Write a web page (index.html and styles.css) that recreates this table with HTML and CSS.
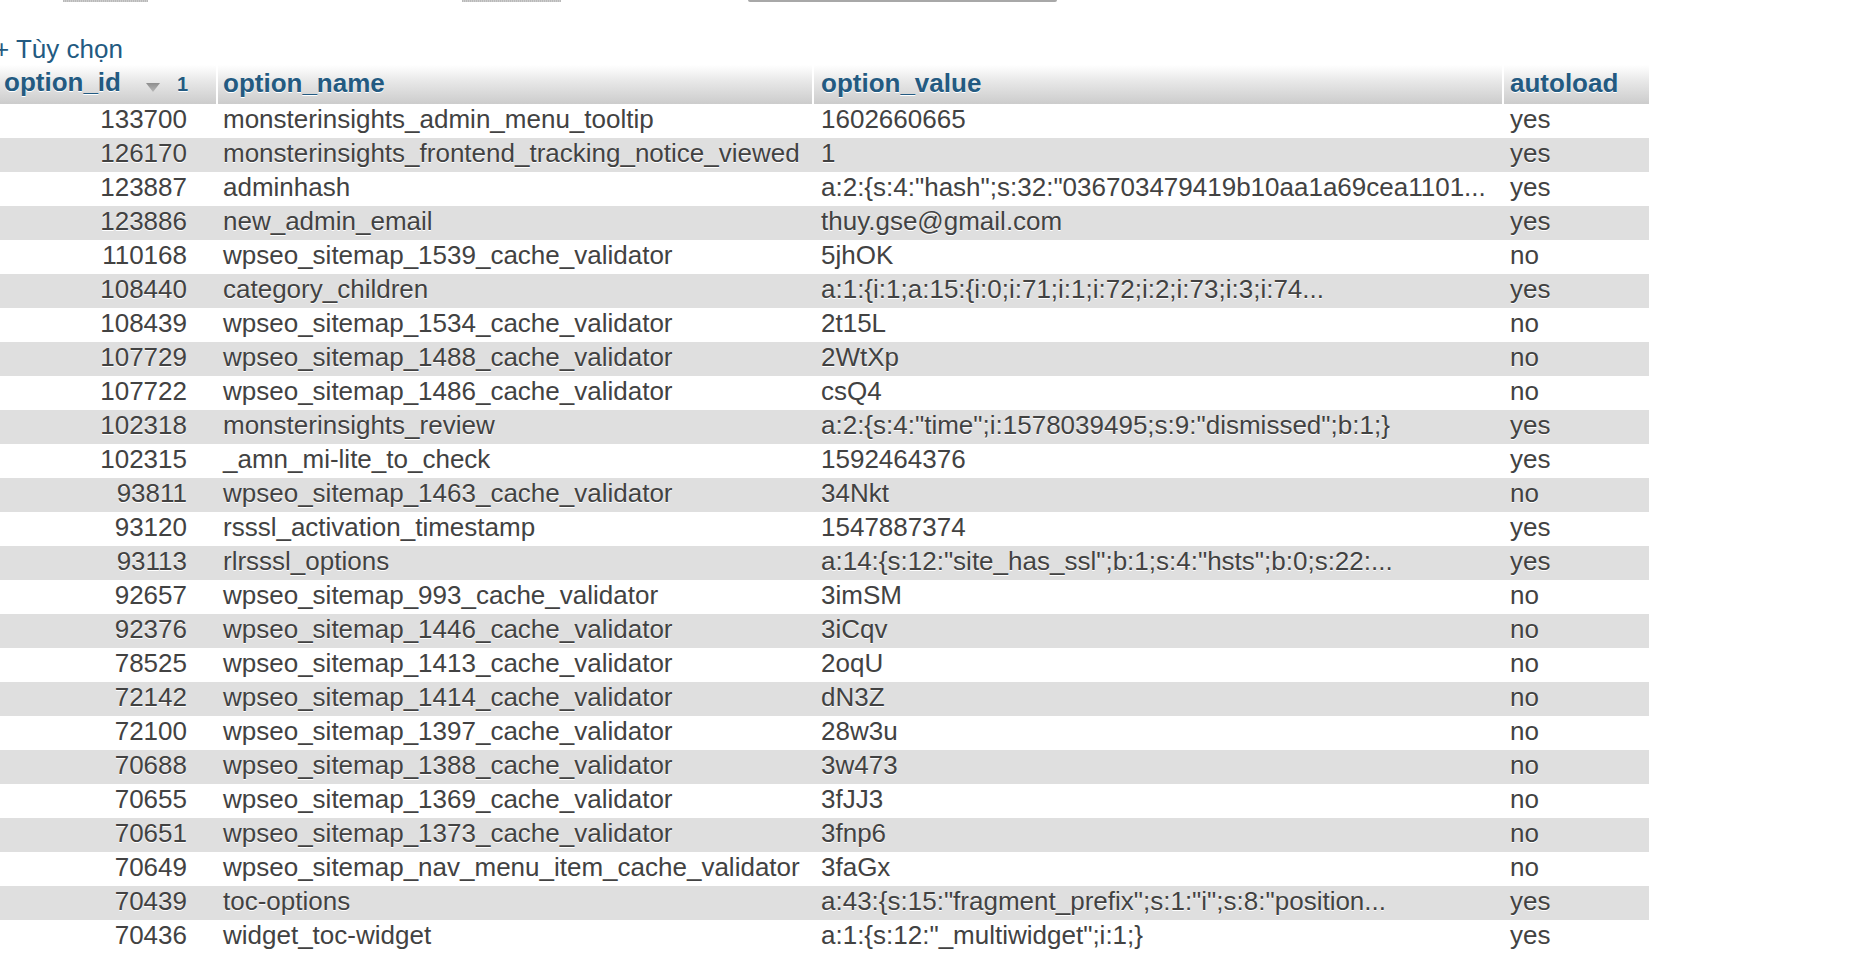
FILE: index.html
```html
<!DOCTYPE html>
<html lang="vi">
<head>
<meta charset="utf-8">
<title>wp_options</title>
<link rel="stylesheet" href="styles.css">
</head>
<body>
<div class="topbar">
  <span class="btn-edge btn-a"></span>
  <span class="btn-edge btn-b"></span>
  <span class="btn-edge btn-c"></span>
</div>
<div class="options-link">+ Tùy chọn</div>
<table class="data">
  <colgroup>
    <col class="c1"><col class="c2"><col class="c3"><col class="c4">
  </colgroup>
  <thead>
    <tr>
      <th class="th-id"><span class="hlabel">option_id</span><svg class="sort-icon" width="14" height="9" viewBox="0 0 14 9"><defs><linearGradient id="g" x1="0" y1="0" x2="0" y2="1"><stop offset="0" stop-color="#8e8e8e"/><stop offset="1" stop-color="#b8b8b8"/></linearGradient></defs><polygon points="0,0 14,0 7,9" fill="url(#g)"/></svg><span class="sort-num">1</span></th>
      <th class="th-name"><span class="hlabel">option_name</span></th>
      <th class="th-value"><span class="hlabel">option_value</span></th>
      <th class="th-auto last"><span class="hlabel">autoload</span></th>
    </tr>
  </thead>
  <tbody>
    <tr><td class="num">133700</td><td class="name">monsterinsights_admin_menu_tooltip</td><td class="value">1602660665</td><td class="auto">yes</td></tr>
    <tr><td class="num">126170</td><td class="name">monsterinsights_frontend_tracking_notice_viewed</td><td class="value">1</td><td class="auto">yes</td></tr>
    <tr><td class="num">123887</td><td class="name">adminhash</td><td class="value">a:2:{s:4:"hash";s:32:"036703479419b10aa1a69cea1101...</td><td class="auto">yes</td></tr>
    <tr><td class="num">123886</td><td class="name">new_admin_email</td><td class="value">thuy.gse@gmail.com</td><td class="auto">yes</td></tr>
    <tr><td class="num">110168</td><td class="name">wpseo_sitemap_1539_cache_validator</td><td class="value">5jhOK</td><td class="auto">no</td></tr>
    <tr><td class="num">108440</td><td class="name">category_children</td><td class="value">a:1:{i:1;a:15:{i:0;i:71;i:1;i:72;i:2;i:73;i:3;i:74...</td><td class="auto">yes</td></tr>
    <tr><td class="num">108439</td><td class="name">wpseo_sitemap_1534_cache_validator</td><td class="value">2t15L</td><td class="auto">no</td></tr>
    <tr><td class="num">107729</td><td class="name">wpseo_sitemap_1488_cache_validator</td><td class="value">2WtXp</td><td class="auto">no</td></tr>
    <tr><td class="num">107722</td><td class="name">wpseo_sitemap_1486_cache_validator</td><td class="value">csQ4</td><td class="auto">no</td></tr>
    <tr><td class="num">102318</td><td class="name">monsterinsights_review</td><td class="value">a:2:{s:4:"time";i:1578039495;s:9:"dismissed";b:1;}</td><td class="auto">yes</td></tr>
    <tr><td class="num">102315</td><td class="name">_amn_mi-lite_to_check</td><td class="value">1592464376</td><td class="auto">yes</td></tr>
    <tr><td class="num">93811</td><td class="name">wpseo_sitemap_1463_cache_validator</td><td class="value">34Nkt</td><td class="auto">no</td></tr>
    <tr><td class="num">93120</td><td class="name">rsssl_activation_timestamp</td><td class="value">1547887374</td><td class="auto">yes</td></tr>
    <tr><td class="num">93113</td><td class="name">rlrsssl_options</td><td class="value">a:14:{s:12:"site_has_ssl";b:1;s:4:"hsts";b:0;s:22:...</td><td class="auto">yes</td></tr>
    <tr><td class="num">92657</td><td class="name">wpseo_sitemap_993_cache_validator</td><td class="value">3imSM</td><td class="auto">no</td></tr>
    <tr><td class="num">92376</td><td class="name">wpseo_sitemap_1446_cache_validator</td><td class="value">3iCqv</td><td class="auto">no</td></tr>
    <tr><td class="num">78525</td><td class="name">wpseo_sitemap_1413_cache_validator</td><td class="value">2oqU</td><td class="auto">no</td></tr>
    <tr><td class="num">72142</td><td class="name">wpseo_sitemap_1414_cache_validator</td><td class="value">dN3Z</td><td class="auto">no</td></tr>
    <tr><td class="num">72100</td><td class="name">wpseo_sitemap_1397_cache_validator</td><td class="value">28w3u</td><td class="auto">no</td></tr>
    <tr><td class="num">70688</td><td class="name">wpseo_sitemap_1388_cache_validator</td><td class="value">3w473</td><td class="auto">no</td></tr>
    <tr><td class="num">70655</td><td class="name">wpseo_sitemap_1369_cache_validator</td><td class="value">3fJJ3</td><td class="auto">no</td></tr>
    <tr><td class="num">70651</td><td class="name">wpseo_sitemap_1373_cache_validator</td><td class="value">3fnp6</td><td class="auto">no</td></tr>
    <tr><td class="num">70649</td><td class="name">wpseo_sitemap_nav_menu_item_cache_validator</td><td class="value">3faGx</td><td class="auto">no</td></tr>
    <tr><td class="num">70439</td><td class="name">toc-options</td><td class="value">a:43:{s:15:"fragment_prefix";s:1:"i";s:8:"position...</td><td class="auto">yes</td></tr>
    <tr><td class="num">70436</td><td class="name">widget_toc-widget</td><td class="value">a:1:{s:12:"_multiwidget";i:1;}</td><td class="auto">yes</td></tr>
  </tbody>
</table>
</body>
</html>
```

FILE: styles.css
```css
html, body {
  margin: 0;
  padding: 0;
  background: #fff;
  overflow: hidden;
}
body {
  font-family: "Liberation Sans", Arial, Helvetica, sans-serif;
  font-size: 26px;
  color: #424242;
}

.topbar {
  display: flex;
  height: 3px;
}
.btn-edge {
  display: block;
  height: 2px;
}
.btn-a {
  margin-left: 63px;
  width: 85px;
  background: repeating-linear-gradient(90deg, #b9b9b9 0 1px, #cdcdcd 1px 2px);
}
.btn-b {
  margin-left: 314px;
  width: 99px;
  background: repeating-linear-gradient(90deg, #b9b9b9 0 1px, #cdcdcd 1px 2px);
}
.btn-c {
  margin-left: 187px;
  width: 309px;
  background: #a8a8a8;
  border-radius: 0 0 2px 2px;
}

.options-link {
  margin: 31px 0 0 -6px;
  line-height: 30px;
  color: #235a81;
  font-size: 26px;
}

.data {
  margin-top: 1px;
  border-collapse: separate;
  border-spacing: 0;
  table-layout: fixed;
  width: 1649px;
}
.c1 { width: 218px; }
.c2 { width: 596px; }
.c3 { width: 690px; }
.c4 { width: 145px; }

.data th {
  text-align: left;
  font-weight: bold;
  color: #235a81;
  line-height: 34px;
  height: 37px;
  padding: 0 0 3px 7px;
  box-sizing: border-box;
  background: linear-gradient(to bottom, #ffffff 0%, #e6e6e6 45%, #cccccc 100%);
  border-right: 2px solid #fff;
  text-shadow: 0 1px 0 #fff;
  white-space: nowrap;
  overflow: hidden;
}
.data th.last {
  border-right: 0;
}
.data th.th-id {
  padding-left: 4px;
}
.data th.th-name {
  padding-left: 5px;
}
.data th.th-auto {
  padding-left: 6px;
}
.sort-icon {
  margin-left: 25px;
  vertical-align: -1px;
}
.sort-num {
  margin-left: 17px;
  font-size: 20px;
}

.data td {
  line-height: 31px;
  height: 34px;
  padding: 0 0 3px 7px;
  box-sizing: border-box;
  white-space: nowrap;
  overflow: hidden;
  text-shadow: 0 1px 0 #fff;
}
.data td.num {
  text-align: right;
  padding: 0 31px 3px 0;
}
.data td.name {
  padding-left: 5px;
}
.data td.auto {
  padding-left: 6px;
}
.data tbody tr:nth-child(even) td {
  background: #dfdfdf;
}
```
